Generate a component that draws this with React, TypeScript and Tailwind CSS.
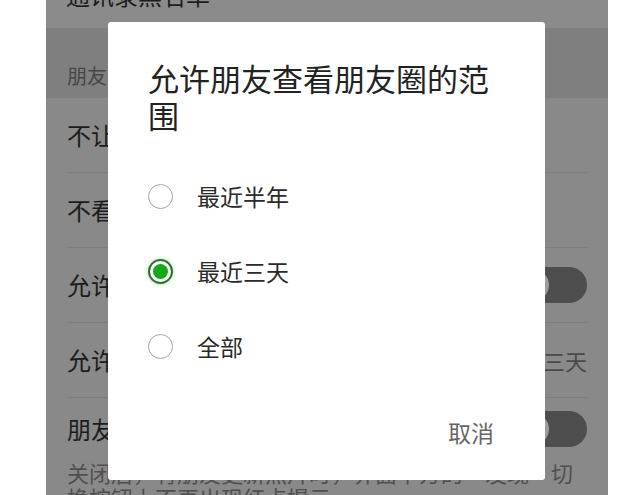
import React from 'react';

const cjk = { fontFamily: '"Noto Sans CJK SC", "Noto Sans", sans-serif' };

function Toggle() {
  return (
    <div className="relative h-[36px] w-[72px] rounded-full bg-[#4e4e4e]">
      <div className="absolute left-[2px] top-[2px] h-[32px] w-[32px] rounded-full bg-[#9c9c9c]" />
    </div>
  );
}

function Row({ label, right, last }: { label: string; right?: React.ReactNode; last?: boolean }) {
  return (
    <div className={`mx-[21px] flex items-center justify-between ${last ? 'h-[62px]' : 'h-[75px] border-b border-[#7d7d7d]'}`}>
      <span className="text-[24px] leading-none text-[#1c1c1c]">{label}</span>
      {right}
    </div>
  );
}

function Radio({ checked, label }: { checked?: boolean; label: string }) {
  return (
    <div className="flex h-[75px] items-center">
      {checked ? (
        <div className="flex h-[25px] w-[25px] items-center justify-center rounded-full border-[2px] border-[#2f6f34] bg-white shadow-[0_0_3px_1px_rgba(80,200,80,0.35)]">
          <div className="h-[15px] w-[15px] rounded-full bg-[#16a818]" />
        </div>
      ) : (
        <div className="h-[25px] w-[25px] rounded-full border-[1.5px] border-[#a3a3a3] bg-white" />
      )}
      <span className="ml-[24px] text-[23px] leading-none text-[#2a2a2a]">{label}</span>
    </div>
  );
}

export default function App() {
  return (
    <div className="min-h-[495px] w-[640px] overflow-hidden bg-white" style={cjk}>
      <div className="relative ml-[46px] h-[495px] w-[562px] overflow-hidden bg-[#898989]">
        {/* 顶部 */}
        <div className="h-[28px] overflow-hidden bg-[#8b8b8b]">
          <div className="-mt-[17px] px-[20px] text-[24px] leading-[24px] text-[#1c1c1c]">通讯录黑名单</div>
        </div>

        {/* 分组标题 */}
        <div className="flex h-[70px] items-end bg-[#7f7f7f] px-[21px] pb-[12px]">
          <span className="text-[20px] leading-none text-[#474747]">朋友圈</span>
        </div>

        <Row label="不让他（她）看" />
        <Row label="不看他（她）" />
        <Row label="允许陌生人查看十条朋友圈" right={<Toggle />} />
        <Row
          label="允许朋友查看朋友圈的范围"
          right={<span className="text-[22px] leading-none text-[#4a4a4a]">最近三天</span>}
        />
        <Row label="朋友圈更新提醒" right={<Toggle />} last />

        <p className="px-[21px] text-[22px] leading-[25px] text-[#505050]">
          关闭后，有朋友更新照片时，界面下方的“发现”切换按钮上不再出现红点提示。
        </p>

        {/* 弹窗 */}
        <div className="absolute left-[62px] top-[22px] flex h-[458px] w-[437px] flex-col rounded-[3px] bg-white pl-[40px] pr-[38px] pt-[37px]">
          <h2 className="text-[31px] font-normal leading-[37px] text-[#222]">允许朋友查看朋友圈的范围</h2>
          <div className="mt-[26px] flex flex-col">
            <Radio label="最近半年" />
            <Radio label="最近三天" checked />
            <Radio label="全部" />
          </div>
          <div className="mt-[28px] flex h-[40px] items-center justify-end pr-[13px]">
            <span className="text-[23px] leading-none text-[#666]">取消</span>
          </div>
        </div>
      </div>
    </div>
  );
}
